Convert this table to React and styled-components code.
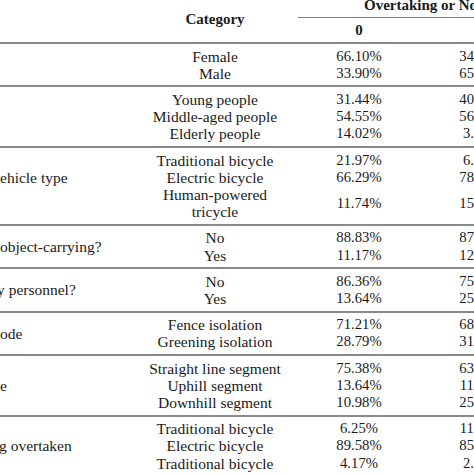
import React from 'react'
import styled, { createGlobalStyle } from 'styled-components'

const Global = createGlobalStyle`
  html, body {
    margin: 0;
    padding: 0;
    background: #fff;
    overflow: hidden;
  }
  body {
    font-family: "Liberation Serif", "Times New Roman", serif;
    color: #1a1a1a;
  }
`

const COLS = '132px 166px 122px 124px'

const Table = styled.div`
  width: 544px;
  margin-top: -3px;
`

const Head = styled.div`
  display: grid;
  grid-template-columns: ${COLS};
  grid-template-rows: 21px 24px;
  border-bottom: 2px solid #8a8a8a;
  font-weight: bold;
  font-size: 15px;
`

const HeadCell = styled.div`
  grid-column: ${p => p.$col};
  grid-row: ${p => p.$row};
  display: flex;
  align-items: center;
  justify-content: center;
`

const Title = styled.div`
  grid-column: 3 / span 2;
  grid-row: 1;
  line-height: 17px;
  text-align: center;
  padding-left: 4px;
  border-bottom: 1.3px solid #7c7c7c;
  white-space: nowrap;
`

const Group = styled.div`
  display: grid;
  grid-template-columns: ${COLS};
  grid-auto-rows: minmax(17.2px, auto);
  padding: 3.5px 0;
  border-bottom: 2px solid #8a8a8a;
  font-size: 15.5px;
  line-height: 17.2px;
`

const Label = styled.div`
  grid-column: 1;
  grid-row: ${p => p.$row};
  align-self: center;
  margin-left: ${p => p.$shift || 0}px;
  white-space: nowrap;
`

const Cat = styled.div`
  grid-column: 2;
  grid-row: ${p => p.$row};
  text-align: center;
  white-space: nowrap;
`

const Val = styled.div`
  grid-column: ${p => p.$col};
  grid-row: ${p => p.$row};
  align-self: center;
  text-align: center;
  font-size: 14.7px;
  white-space: nowrap;
`

const groups = [
  { label: '', rows: [['Female', '66.10%', '34.62%'], ['Male', '33.90%', '65.38%']] },
  { label: '', rows: [['Young people', '31.44%', '40.38%'], ['Middle-aged people', '54.55%', '56.41%'], ['Elderly people', '14.02%', '3.21%']] },
  {
    label: 'ehicle type', labelRow: '2', rows: [
      ['Traditional bicycle', '21.97%', '6.41%'],
      ['Electric bicycle', '66.29%', '78.21%'],
      [<>Human-powered<br />tricycle</>, '11.74%', '15.38%'],
    ]
  },
  { label: 'object-carrying?', rows: [['No', '88.83%', '87.18%'], ['Yes', '11.17%', '12.82%']] },
  { label: 'y personnel?', shift: -3, rows: [['No', '86.36%', '75.00%'], ['Yes', '13.64%', '25.00%']] },
  { label: 'ode', rows: [['Fence isolation', '71.21%', '68.59%'], ['Greening isolation', '28.79%', '31.41%']] },
  { label: 'e', rows: [['Straight line segment', '75.38%', '63.46%'], ['Uphill segment', '13.64%', '11.54%'], ['Downhill segment', '10.98%', '25.00%']] },
  { label: 'g overtaken', shift: -1, rows: [['Traditional bicycle', '6.25%', '11.54%'], ['Electric bicycle', '89.58%', '85.90%'], ['Traditional bicycle', '4.17%', '2.56%']] },
]

const App = () => (
  <>
    <Global />
    <Table>
      <Head>
        <HeadCell $col="2" $row="1 / span 2">Category</HeadCell>
        <Title>Overtaking or Not</Title>
        <HeadCell $col="3" $row="2">0</HeadCell>
        <HeadCell $col="4" $row="2">1</HeadCell>
      </Head>
      {groups.map((g, gi) => (
        <Group key={gi}>
          {g.label && (
            <Label $row={g.labelRow || `1 / span ${g.rows.length}`} $shift={g.shift}>{g.label}</Label>
          )}
          {g.rows.map((r, ri) => (
            <React.Fragment key={ri}>
              <Cat $row={ri + 1}>{r[0]}</Cat>
              <Val $col="3" $row={ri + 1}>{r[1]}</Val>
              <Val $col="4" $row={ri + 1}>{r[2]}</Val>
            </React.Fragment>
          ))}
        </Group>
      ))}
    </Table>
  </>
)

export default App
